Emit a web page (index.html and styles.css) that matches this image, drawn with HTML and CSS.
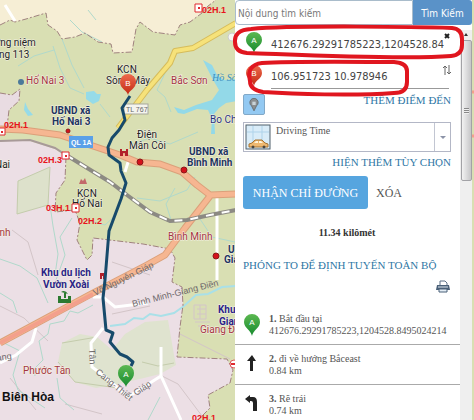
FILE: index.html
```html
<!DOCTYPE html>
<html lang="vi">
<head>
    <meta charset="UTF-8">
    <meta name="viewport" content="width=device-width, initial-scale=1.0">
    <title>Tìm đường</title>
    <link rel="stylesheet" href="styles.css">
</head>
<body>
<div class="viewer">
    <svg class="map" viewBox="0 0 474 420" preserveAspectRatio="xMinYMin slice" role="img" aria-label="Bản đồ Biên Hòa">
        <defs>
            <linearGradient id="pin-green" x1="0" y1="0" x2="0" y2="1">
                <stop offset="0" stop-color="#5cb851"/>
                <stop offset="1" stop-color="#168a2e"/>
            </linearGradient>
            <linearGradient id="pin-red" x1="0" y1="0" x2="0" y2="1">
                <stop offset="0" stop-color="#ee6a4c"/>
                <stop offset="1" stop-color="#c22a14"/>
            </linearGradient>
        </defs>

        <!-- land areas -->
        <rect width="474" height="420" fill="#d9dfb3"/>
        <path fill="#f6eed5" d="M0 0H216L208 6L202 13L190 22L180 25L175 35L153 32L140 22L136 29L132 52L113 53L111 44L98 42L85 33L75 37L62 39L57 31L48 25L46 13L26 19L15 22L10 20L0 25Z"/>
        <path fill="#e9dce2" d="M0 93L12 95L20 89L19 101L9 110L7 127L0 128Z"/>
        <path fill="#ecdfe5" d="M0 141L30 141L55 149L66 157L65 180L56 193L55 212L75 210L80 223L77 240L87 260L92 255L93 238L143 244L170 249L175 258L172 282L182 287L183 305L180 327L177 357L227 359L233 370L230 383L208 395L210 408L198 420H0Z"/>
        <path fill="#dde1cb" d="M18 181L50 167L48 205L17 214Z"/>
        <path fill="#dfe3cf" d="M62 343L80 334L97 337L112 350L125 334L145 322L168 320L174 355L176 365L160 374L144 378L118 384L96 388L75 382L58 362Z"/>
        <g fill="none" stroke="#c4ccac" stroke-width="1">
            <path d="M18 181L50 167L48 205L17 214Z"/>
            <path d="M62 343L97 337M58 362L75 382L118 388M142 362L158 366L174 363"/>
        </g>
        <g fill="none" stroke="#d3c5c8" stroke-width="1">
            <path d="M12 230L28 242L38 275M0 306L24 318L48 341M112 262L150 275M162 376L178 384L205 420M65 404L102 414M10 378L36 410M180 334L230 359M112 314L150 306"/>
            <path d="M194 305h12v14h-12zM197 309h9M197 314h9M200 305v14M195 322h15M198 326h12"/>
        </g>

        <!-- water -->
        <path fill="#93d9e8" d="M203 60L212 65L217 75L224 80L237 79V101L226 103L219 108L214 114L215 134H211L212 119L208 110L197 109L184 114L178 113L174 107L184 110L196 105L212 100L219 90L212 78Z"/>
        <path fill="#96dbe8" d="M86 92L94 91L97 94L101 94L99 101L93 104L86 99ZM25 102L28 109L33 115L28 116L24 110Z"/>
        <g fill="none" stroke="#b0d9cb" stroke-width="1">
            <path d="M53 46L60 68L70 88L84 94M62 39L72 65L84 88M70 20L82 32L102 42M88 10L96 20M100 104L110 117M18 66L34 56L54 50M170 63L157 90L165 97L171 112M130 145L150 138L170 144L198 132M137 198L160 201L187 190L195 177M117 214L105 225L90 221M172 223L166 204L175 188M198 216L212 237L235 242"/>
            <path d="M50 205L53 226L58 254L55 275M72 218L60 237L65 255L56 280M0 259L20 266L37 278L48 303M0 293L13 301L17 313M0 341L20 351L13 375L18 390L45 408M93 305L78 313L70 311L64 321L50 324L48 334L39 341L43 360L34 369L35 376M57 378L60 398L74 410M148 420L160 397"/>
        </g>
        <path d="M110 326L125 324L134 318L143 319L150 314L161 316L174 313L184 306L196 295L208 294L222 287L236 286" fill="none" stroke="#a9e0e8" stroke-width="2"/>

        <!-- borders -->
        <g fill="none" stroke="#a0827f" stroke-width="1" stroke-dasharray="6 2 2 2">
            <path d="M0 25L10 20L15 22L26 19L46 13L48 25L57 31L62 39L75 37L85 33L98 42L111 44L113 53L132 52L136 29L140 22L153 32L175 35L180 25L190 22L202 13L208 6L216 0"/>
            <path d="M0 93L12 95L20 89L19 101L9 110L7 127M66 157L65 180L56 193L55 212L75 210L80 223L77 240L87 260L92 255L93 238L143 244L170 249L175 258L172 282L182 287L183 305L180 327L177 357L227 359L233 370L230 383L208 395L210 408L198 420"/>
        </g>

        <!-- minor roads -->
        <g fill="none" stroke="#fff" stroke-width="3">
            <path d="M5 5L15 21M129 159L125 172M217 197V280M0 363L16 355L32 342L36 328M103 328L91 343L92 367L104 376L128 397L161 376L181 420M93 297L103 297L115 307L148 303M161 376V347"/>
        </g>

        <!-- highways -->
        <g fill="none" stroke-linejoin="round">
            <path d="M0 129L23 130L60 135L90 145L120 155L137 162L160 164L182 172L197 185L210 195L236 194M210 196L185 228L165 255L147 265L93 293L0 343" stroke="#dba07a" stroke-width="7"/>
            <path d="M0 129L23 130L60 135L90 145L120 155L137 162L160 164L182 172L197 185L210 195L236 194M210 196L185 228L165 255L147 265L93 293L0 343" stroke="#f6b691" stroke-width="5"/>
            <path d="M93 294L0 343" stroke="#f3a08c" stroke-width="4"/>
            <path d="M236 23L193 48L175 51L170 63L147 90L118 128" stroke="#d6bc5b" stroke-width="6"/>
            <path d="M236 23L193 48L175 51L170 63L147 90L118 128" stroke="#f6e27a" stroke-width="4"/>
            <path d="M470 92H474M470 136H474" stroke="#f3a08c" stroke-width="3"/>
        </g>

        <!-- railway -->
        <g fill="none">
            <path d="M0 141L30 140L55 148L66 155" stroke="#a89a98" stroke-width="2"/>
            <path d="M66 155L110 182L127 195L150 212L170 221L187 220L210 215L236 210" stroke="#8c8a83" stroke-width="4"/>
            <path d="M66 155L110 182L127 195L150 212L170 221L187 220L210 215L236 210" stroke="#fff" stroke-width="2" stroke-dasharray="8 8"/>
        </g>

        <!-- road shields -->
        <rect x="69" y="136" width="24" height="12" fill="#5aa0e8"/>
        <text x="71" y="145" class="shield">QL 1A</text>
        <rect x="124" y="104" width="24" height="10" fill="#f4f4ee" stroke="#a8a89c"/>
        <text x="126" y="112" class="shield shield-local">TL 767</text>

        <!-- street names -->
        <g class="street">
            <text transform="translate(95 296) rotate(-26)">Võ Nguyên Giáp</text>
            <text transform="translate(133 307) rotate(-14)">Bình Minh-Giang Điền</text>
            <text transform="translate(89 349) rotate(87)">Tân</text>
            <text transform="translate(95 373) rotate(39)">Cang-Thiết</text>
            <text transform="translate(136 396) rotate(-33)">Giáp</text>
            <text transform="translate(-3 361) rotate(-8)">ang</text>
        </g>

        <!-- place names -->
        <g class="place">
            <text x="-6" y="46">ưng niệm</text>
            <text x="-1" y="58">ng 113</text>
            <text x="-5" y="168">Nai</text>
            <text x="117" y="73">KCN</text>
            <text x="106" y="84">Sông Mây</text>
            <text x="137" y="138">Điện</text>
            <text x="129" y="149">Mân Côi</text>
            <text x="77" y="197">KCN</text>
            <text x="72" y="207">Hố Nai</text>
        </g>
        <g class="place place-commune">
            <text x="26" y="84">Hố Nai 3</text>
            <text x="171" y="84">Bắc Sơn</text>
            <text x="-3" y="236">inh</text>
            <text x="168" y="240">Bình Minh</text>
            <text x="23" y="374">Phước Tân</text>
            <text x="200" y="333">Giang Điền</text>
        </g>
        <g class="place place-office">
            <text x="51" y="114">UBND xã</text>
            <text x="52" y="125">Hố Nai 3</text>
            <text x="189" y="155">UBND xã</text>
            <text x="187" y="166">Bình Minh</text>
            <text x="228" y="253">UBND</text>
            <text x="224" y="263">Giang</text>
        </g>
        <g class="place place-park">
            <text x="41" y="276">Khu du lịch</text>
            <text x="43" y="288">Vườn Xoài</text>
            <text x="218" y="313">Khu</text>
            <text x="219" y="325">Giang</text>
        </g>
        <text x="210" y="123" class="place place-water-town">Bo Chang</text>
        <text x="212" y="81" class="lake">Hồ Sông</text>
        <text x="2" y="401" class="city">Biên Hòa</text>

        <!-- points -->
        <circle cx="21" cy="82" r="3" fill="#4c7a9a"/>
        <g fill="#d4121b" stroke="#8b1a1a" stroke-width="1">
            <circle cx="68" cy="131" r="2"/>
            <circle cx="140" cy="162" r="3"/>
            <circle cx="184" cy="170" r="3"/>
            <circle cx="216" cy="256" r="3"/>
        </g>
        <path fill="#b3202a" d="M120 149h2v2h4v-2h2v7h-3v-3h-2v3h-3zM100 273h5v6h-2v-3h-1v3h-2z"/>
        <path fill="#c3696a" d="M79 184l2-5 2 2 2-3 2 6z"/>
        <path fill="#2c7a30" d="M58 296h3v3h7v-3h3v7H58zM64 293h2v5h-2zM61 292q4-3 7 2l-3-1z"/>
        <g fill="#fff" stroke="#e0292f" stroke-width="1">
            <path d="M195 4h7v8h-7zM62 152h7v7h-7zM72 204h7v8h-7zM-2 128h7v7h-7z"/>
        </g>
        <path fill="#e0292f" d="M198 7h2v2h-2zM65 155h2v2h-2zM75 207h2v2h-2zM1 131h2v2h-2z"/>
        <circle cx="234" cy="364" r="4" fill="#fff" stroke="#e0565a"/>
        <path d="M231 364h6" stroke="#e0292f" stroke-width="2"/>
        <circle cx="232" cy="37" r="4" fill="#f7f7f2" stroke="#ccc"/>
        <g class="station">
            <text x="202" y="13">02H.1</text>
            <text x="4" y="128">02H.1</text>
            <text x="38" y="163">02H.3</text>
            <text x="46" y="211">03H.1</text>
            <text x="78" y="224">02H.2</text>
            <text x="192" y="421">02H.1</text>
        </g>

        <!-- route -->
        <path d="M130 96L122 108L125 120L119 130L112 138L108 147L109 155L120 163L121 171L126 183L121 199L109 231L105 280L103 298L106 330L113 333L110 342L115 348L120 354L127 357L133 362L131 366" fill="none" stroke="#174a6b" stroke-width="3" stroke-linejoin="round"/>
        <path d="M126 387C125 382 118 380 118 373A8 8 0 0 1 134 373C134 380 127 382 126 387Z" fill="url(#pin-green)"/>
        <text x="126" y="377" class="pin-letter">A</text>
        <path d="M128 95C127 90 120 89 120 82A8 8 0 0 1 136 82C136 89 129 90 128 95Z" fill="url(#pin-red)"/>
        <text x="128" y="86" class="pin-letter">B</text>
    </svg>

    <div class="panel">
        <form class="search">
            <input type="text" class="search-input" placeholder="Nội dung tìm kiếm" aria-label="Nội dung tìm kiếm">
            <button type="submit" class="search-button">Tìm Kiếm</button>
        </form>

        <div class="panel-body">
            <div class="directions">
                <div class="stop stop-start">
                    <svg class="pin" viewBox="0 0 18 22" aria-hidden="true">
                        <path d="M9 21C8 15 1 14 1 8A8 8 0 0 1 17 8C17 14 10 15 9 21Z" fill="url(#pin-green)"/>
                        <text x="9" y="11" class="pin-letter">A</text>
                    </svg>
                    <input type="text" class="stop-input" aria-label="Điểm A" value="412676.29291785223,1204528.84">
                    <button type="button" class="icon-button" aria-label="Xóa điểm">
                        <svg viewBox="0 0 8 8" width="8" height="8"><path d="M2 2l4 4M6 2l-4 4" stroke="#222" stroke-width="2"/></svg>
                    </button>
                </div>
                <div class="stop stop-end">
                    <svg class="pin" viewBox="0 0 18 22" aria-hidden="true">
                        <path d="M9 21C8 15 1 14 1 8A8 8 0 0 1 17 8C17 14 10 15 9 21Z" fill="url(#pin-red)"/>
                        <text x="9" y="11" class="pin-letter">B</text>
                    </svg>
                    <input type="text" class="stop-input" aria-label="Điểm B" value="106.951723 10.978946">
                    <button type="button" class="icon-button" aria-label="Đảo chiều">
                        <svg viewBox="0 0 8 10" width="8" height="10"><path d="M2 10V1M0 3l2-2 2 2M6 0v9M4 7l2 2 2-2" fill="none" stroke="#666"/></svg>
                    </button>
                </div>

                <div class="add-row">
                    <button type="button" class="map-click" aria-label="Chọn điểm trên bản đồ">
                        <svg viewBox="0 0 12 16" width="10" height="14"><path d="M6 15L3 9A5 5 0 1 1 9 9Z" fill="#8b8f91" stroke="#63686b"/><path d="M4 4h4v4H4z" fill="#c9d3d8"/></svg>
                    </button>
                    <a href="#" class="link">THÊM ĐIỂM ĐẾN</a>
                </div>

                <div class="travel">
                    <svg class="travel-icon" viewBox="0 0 26 26" aria-hidden="true">
                        <rect x="1" y="1" width="24" height="24" fill="#d9ecf8" stroke="#4f5f6b"/>
                        <path d="M2 8h22M8 2v18M17 2v18" stroke="#afd3ea"/>
                        <path d="M4 23v-3l3-1 3-3h7l3 3 3 1v3z" fill="#efb870" stroke="#a77435"/>
                        <path d="M9 19l2-2h2v2zM14 17h2l2 2h-4z" fill="#fff4dc"/>
                        <circle cx="8" cy="23" r="1" fill="#777" stroke="#333"/>
                        <circle cx="19" cy="23" r="1" fill="#777" stroke="#333"/>
                    </svg>
                    <select class="travel-select" aria-label="Phương tiện">
                        <option>Driving Time</option>
                    </select>
                    <span class="travel-arrow"></span>
                </div>

                <a href="#" class="link link-options">HIỆN THÊM TÙY CHỌN</a>

                <div class="actions">
                    <button type="button" class="get-route">NHẬN CHỈ ĐƯỜNG</button>
                    <button type="button" class="clear">XÓA</button>
                </div>

                <p class="distance">11.34 kilômét</p>
                <a href="#" class="link link-zoom">PHÓNG TO ĐỂ ĐỊNH TUYẾN TOÀN BỘ</a>

                <button type="button" class="icon-button print" aria-label="In">
                    <svg viewBox="0 0 14 13" width="14" height="13">
                        <path d="M4 5V1h5l2 2v2" fill="#fff" stroke="#5b6f85"/>
                        <path d="M1 5h12l1 5H0z" fill="#4a6078"/>
                        <path d="M2 7h10" stroke="#dfe8f0"/>
                        <path d="M3 9h8v3H3z" fill="#e4edf5" stroke="#4a6078"/>
                    </svg>
                </button>

                <ol class="steps">
                    <li class="step">
                        <svg class="step-icon" viewBox="0 0 18 24" aria-hidden="true">
                            <path d="M9 23C8 17 1 15 1 9A8 8 0 0 1 17 9C17 15 10 17 9 23Z" fill="url(#pin-green)"/>
                            <text x="9" y="12" class="pin-letter">A</text>
                        </svg>
                        <div><b>1.</b> Bắt đầu tại<br>412676.29291785223,1204528.8495024214</div>
                    </li>
                    <li class="step">
                        <svg class="step-icon" viewBox="0 0 18 24" aria-hidden="true"><path d="M7 18V8H4L9 2L13 8H10V18Z" fill="#222"/></svg>
                        <div><b>2.</b> đi về hướng Bắceast<br>0.84 km</div>
                    </li>
                    <li class="step">
                        <svg class="step-icon" viewBox="0 0 18 24" aria-hidden="true"><path d="M2 6L7 2V4H10Q14 4 14 9V18H10V10Q10 8 8 8H7V10Z" fill="#222"/></svg>
                        <div><b>3.</b> Rẽ trái<br>0.74 km</div>
                    </li>
                </ol>
            </div>

            <div class="scrollbar">
                <span class="scroll-up"></span>
                <span class="scroll-thumb"></span>
            </div>
        </div>

        <svg class="marks" viewBox="0 0 240 80" aria-hidden="true">
            <path d="M18 5C60 1 190 3 219 4Q229 5 229 15V21Q229 31 218 32C170 36 70 31 14 29Q2 28 2 18Q1 6 18 5Z"/>
            <path d="M29 39C60 37 130 38 161 38Q174 39 174 47V58Q174 69 161 69C120 72 60 70 30 68Q17 66 17 57Q13 41 29 39Z"/>
        </svg>
    </div>
</div>
</body>
</html>
```
FILE: styles.css
```css
* {
    box-sizing: border-box;
}

body {
    margin: 0;
    font-family: "Liberation Serif", serif;
    font-size: 10px;
    line-height: 12px;
    color: #555;
}

button, input, select {
    font: inherit;
    color: inherit;
    margin: 0;
    padding: 0;
    border: none;
    background: none;
}

.viewer {
    position: relative;
    height: 100vh;
    overflow: hidden;
    display: flex;
    justify-content: flex-end;
    padding-right: 2px;
}

/* Map */
.map {
    position: absolute;
    inset: 0;
    width: 100%;
    height: 100%;
}

.place {
    font: 10px Roboto, sans-serif;
    fill: #222;
    stroke: #f4f2e4;
    stroke-width: 1px;
    paint-order: stroke;
}

.place-commune {
    fill: #a5343f;
}

.place-office {
    font-weight: bold;
    fill: #1f3560;
}

.place-park {
    font-weight: bold;
    fill: #2b2488;
}

.place-water-town {
    fill: #27307c;
}

.lake {
    font: italic 10px "Liberation Serif", serif;
    fill: #3c8fc0;
}

.city {
    font: bold 12px "Liberation Sans", sans-serif;
    fill: #111;
}

.street {
    font: 9px "Liberation Sans", sans-serif;
    fill: #6f6a6c;
}

.shield {
    font: bold 7px "Liberation Sans", sans-serif;
    fill: #fff;
}

.shield-local {
    font-weight: normal;
    fill: #666;
}

.station {
    font: bold 9px "Liberation Sans", sans-serif;
    fill: #e8141c;
}

.pin-letter {
    font: 8px "Liberation Sans", sans-serif;
    fill: #fff;
    text-anchor: middle;
}

/* Side panel */
.panel {
    position: relative;
    width: calc(50% + 1px);
    height: 100%;
    display: flex;
    flex-direction: column;
    background: #fff;
}

.search {
    display: flex;
    flex: none;
    height: 25px;
    font-family: "DejaVu Sans Condensed", "DejaVu Sans", sans-serif;
    font-size: 10px;
}

.search-input {
    flex: 1;
    min-width: 0;
    padding: 2px 2px 0;
    border: 1px solid #a9bccb;
    border-radius: 4px 0 0 4px;
}

.search-input::placeholder {
    color: #777;
    opacity: 1;
}

.search-button {
    width: 59px;
    padding-top: 3px;
    background: #5a92c8;
    color: #fff;
    border-radius: 0 3px 3px 0;
}

.panel-body {
    flex: 1;
    min-height: 0;
    display: flex;
    overflow: hidden;
}

.directions {
    flex: 1;
    min-width: 0;
    padding: 0 9px 0 8px;
}

/* Stops */
.stop {
    display: flex;
    align-items: flex-start;
    gap: 8px;
}

.stop-start {
    height: 40px;
    padding-top: 7px;
}

.stop-end {
    height: 29px;
}

.pin {
    flex: none;
    width: 18px;
    height: 22px;
    margin-left: 2px;
}

.stop-input {
    flex: 1;
    min-width: 0;
    height: 24px;
    font-family: "DejaVu Sans Condensed", "DejaVu Sans", sans-serif;
    font-size: 11px;
    color: #444;
}

.stop-end .stop-input {
    border-bottom: 1px solid #999;
}

.icon-button {
    display: flex;
    cursor: pointer;
}

.stop .icon-button {
    margin-left: -14px;
}

/* Options */
.add-row {
    display: flex;
    justify-content: space-between;
    align-items: flex-start;
}

.map-click {
    width: 22px;
    height: 21px;
    display: flex;
    align-items: center;
    justify-content: center;
    background: #93c9f2;
    border: 1px solid #82a9c8;
    border-radius: 2px;
}

.link {
    font-size: 11px;
    color: #2f77a5;
    text-decoration: none;
}

.travel {
    display: flex;
    height: 30px;
    margin-top: 7px;
    border: 1px solid #b3b7c6;
}

.travel-icon {
    flex: none;
    width: 26px;
    height: 26px;
    margin: 1px;
}

.travel-select {
    flex: 1;
    min-width: 0;
    padding: 0 4px 12px;
    appearance: none;
}

.travel-arrow {
    width: 16px;
    display: flex;
    align-items: center;
    justify-content: center;
    border-left: 1px solid #c2c6d2;
}

.travel-arrow::before {
    content: "";
    border: 3px solid transparent;
    border-top-color: #8c93a8;
    border-bottom: none;
}

.link-options {
    display: block;
    margin-top: 4px;
    text-align: right;
}

.actions {
    display: flex;
    margin-top: 8px;
    font-size: 12px;
}

.get-route {
    width: 125px;
    height: 33px;
    background: #56a5df;
    color: #fff;
    border-radius: 3px;
}

.clear {
    padding: 0 8px;
}

.distance {
    margin: 18px 0 20px;
    text-align: center;
    font-weight: bold;
    color: #333;
}

.link-zoom {
    display: block;
}

.print {
    margin: 9px 1px 0 auto;
}

/* Steps */
.steps {
    list-style: none;
    margin: 12px -9px 0 -8px;
    padding: 0;
}

.step {
    display: flex;
    gap: 8px;
    height: 40px;
    padding: 8px 8px 0;
    border-bottom: 1px solid #aaa;
}

.step-icon {
    flex: none;
    width: 18px;
    height: 24px;
}

/* Scrollbar */
.scrollbar {
    width: 12px;
    margin-top: 5px;
    display: flex;
    flex-direction: column;
    align-items: center;
    background: #efefef;
}

.scroll-up {
    margin: 3px 0 4px;
    border: 2px solid transparent;
    border-bottom: 3px solid #333;
    border-top: none;
}

.scroll-thumb {
    width: 11px;
    height: 141px;
    background: repeating-linear-gradient(#888 0 1px, #eee 1px 2px) center / 5px 6px no-repeat, linear-gradient(90deg, #f2f2f2, #c6c6c8);
    border: 1px solid #a2a2a6;
    border-radius: 2px;
}

/* Red marker outlines over the stops */
.marks {
    position: absolute;
    top: 24px;
    left: -2px;
    width: 240px;
    height: 80px;
    pointer-events: none;
}

.marks path {
    fill: none;
    stroke: #e0161f;
    stroke-width: 4;
}
```
